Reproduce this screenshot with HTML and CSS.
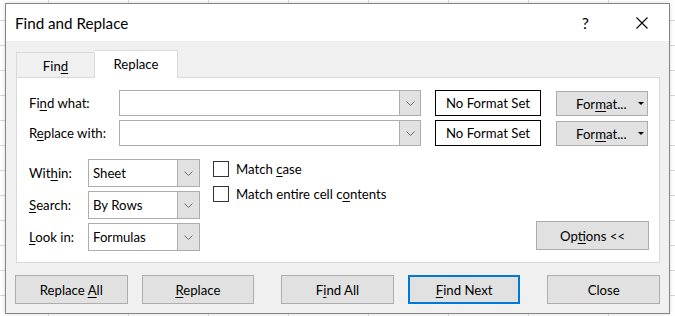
FILE: index.html
```html
<!DOCTYPE html>
<html>
<head>
<meta charset="utf-8">
<link rel="stylesheet" href="styles.css">
</head>
<body>
<div class="dialog">
  <div class="titlebar">
    <span class="title">Find and Replace</span>
    <span class="help">?</span>
    <span class="close"><svg width="12" height="12" viewBox="0 0 12 12"><path d="M0.5 0.5 L11.5 11.5 M11.5 0.5 L0.5 11.5" stroke="#000" stroke-width="1.1" fill="none"/></svg></span>
  </div>
  <div class="body">
    <div class="tabs">
      <div class="tab"><span>Fin<u>d</u></span></div>
      <div class="tab active"><span>Replace</span></div>
    </div>
    <div class="panel">
      <div class="row">
        <span class="label">Fi<u>n</u>d what:</span>
        <div class="combo"><span class="combo-text"></span><span class="drop"><svg width="9" height="5" viewBox="0 0 9 5"><path d="M0.5 0.5 L4.5 4.5 L8.5 0.5" stroke="#6d6d6d" fill="none"/></svg></span></div>
        <div class="nofmt"><span>No Format Set</span></div>
        <div class="fmtbtn"><span>For<u>m</u>at...</span><span class="tri"></span></div>
      </div>
      <div class="row row2">
        <span class="label">R<u>e</u>place with:</span>
        <div class="combo"><span class="combo-text"></span><span class="drop"><svg width="9" height="5" viewBox="0 0 9 5"><path d="M0.5 0.5 L4.5 4.5 L8.5 0.5" stroke="#6d6d6d" fill="none"/></svg></span></div>
        <div class="nofmt"><span>No Format Set</span></div>
        <div class="fmtbtn"><span>For<u>m</u>at...</span><span class="tri"></span></div>
      </div>
      <div class="lower">
        <div class="selects">
          <div class="srow"><span class="slabel">Wit<u>h</u>in:</span><div class="select"><span class="select-text">Sheet</span><span class="drop"><svg width="9" height="5" viewBox="0 0 9 5"><path d="M0.5 0.5 L4.5 4.5 L8.5 0.5" stroke="#6d6d6d" fill="none"/></svg></span></div></div>
          <div class="srow"><span class="slabel"><u>S</u>earch:</span><div class="select"><span class="select-text">By Rows</span><span class="drop"><svg width="9" height="5" viewBox="0 0 9 5"><path d="M0.5 0.5 L4.5 4.5 L8.5 0.5" stroke="#6d6d6d" fill="none"/></svg></span></div></div>
          <div class="srow"><span class="slabel"><u>L</u>ook in:</span><div class="select"><span class="select-text">Formulas</span><span class="drop"><svg width="9" height="5" viewBox="0 0 9 5"><path d="M0.5 0.5 L4.5 4.5 L8.5 0.5" stroke="#6d6d6d" fill="none"/></svg></span></div></div>
        </div>
        <div class="checks">
          <div class="check"><span class="box"></span><span>Match <u>c</u>ase</span></div>
          <div class="check"><span class="box"></span><span>Match entire cell c<u>o</u>ntents</span></div>
        </div>
        <div class="options-wrap">
          <div class="btn options"><span>Op<u>t</u>ions &lt;&lt;</span></div>
        </div>
      </div>
    </div>
    <div class="buttons">
      <div class="btn"><span>Replace <u>A</u>ll</span></div>
      <div class="btn"><span><u>R</u>eplace</span></div>
      <div class="btn wide-gap"><span>F<u>i</u>nd All</span></div>
      <div class="btn default"><span><u>F</u>ind Next</span></div>
      <div class="btn wide-gap"><span>Close</span></div>
    </div>
  </div>
</div>
</body>
</html>
```

FILE: styles.css
```css
* { box-sizing: border-box; }
html, body { margin: 0; padding: 0; }
body {
  width: 675px;
  height: 316px;
  overflow: hidden;
  background-color: #fff;
  background-image:
    linear-gradient(to right, transparent 47px, #d8d8d8 47px, #d8d8d8 48px, transparent 48px),
    linear-gradient(to bottom, transparent 24px, #d8d8d8 24px, #d8d8d8 25px, transparent 25px);
  background-size: 80px 100%, 100% 25px;
  background-position: 1px 0, 0 -4px;
  font-family: "Lato", "Noto Sans", sans-serif;
  font-size: 13.2px;
  color: #000;
  padding-top: 3px;
  padding-left: 5px;
}
u { text-underline-offset: 2px; text-decoration-thickness: 1px; }

.dialog {
  width: 665px;
  height: 311px;
  border: 1px solid #858585;
  background: #f0f0f0;
  box-shadow: 0 0 4px rgba(0,0,0,0.15);
  display: flex;
  flex-direction: column;
}

.titlebar {
  height: 37px;
  background: #fff;
  display: flex;
  align-items: center;
  padding-left: 9px;
  flex: none;
}
.title { font-size: 15.2px; flex: 1; padding-top: 1px; }
.help { font-size: 16px; margin-right: 47px; }
.close { width: 12px; height: 12px; margin-right: 21px; display: flex; }

.body {
  flex: 1;
  padding: 0 9px 0 10px;
}

.tabs {
  margin-top: 9px;
  height: 27px;
  display: flex;
  align-items: flex-end;
  position: relative;
  z-index: 1;
}
.tab {
  width: 79px;
  height: 25px;
  border: 1px solid #d9d9d9;
  border-bottom: none;
  display: flex;
  align-items: center;
  justify-content: center;
  padding-top: 1px;
}
.tab.active {
  width: 83px;
  height: 28px;
  margin-bottom: -1px;
  background: #fff;
  border-left: none;
  padding-top: 0;
  padding-bottom: 2px;
}

.panel {
  height: 186px;
  border: 1px solid #d9d9d9;
  background: #fff;
  padding: 12px 10px 0 12px;
}

.row {
  display: flex;
  align-items: center;
  height: 26px;
}
.row2 { margin-top: 4px; }
.label { width: 90px; }
.combo {
  width: 302px;
  height: 26px;
  border: 1px solid #adadad;
  display: flex;
}
.combo-text { flex: 1; }
.drop {
  width: 22px;
  background: #e1e1e1;
  border-left: 1px solid #adadad;
  display: flex;
  align-items: center;
  justify-content: center;
}
.combo .drop { width: 21px; }
.nofmt {
  margin-left: 14px;
  width: 106px;
  height: 26px;
  border: 1px solid #000;
  display: flex;
  align-items: center;
  justify-content: center;
}
.fmtbtn {
  margin-left: 15px;
  width: 92px;
  height: 25px;
  margin-top: 1px;
  background: #e1e1e1;
  border: 1px solid #adadad;
  display: flex;
  align-items: center;
  padding-left: 19px;
  position: relative;
}
.tri {
  position: absolute;
  right: 3px;
  top: 10px;
  width: 0;
  height: 0;
  border-left: 3px solid transparent;
  border-right: 3px solid transparent;
  border-top: 3px solid #000;
}

.lower {
  margin-top: 13px;
  display: flex;
}
.selects { display: flex; flex-direction: column; gap: 4px; }
.srow { display: flex; align-items: center; height: 28px; }
.slabel { width: 59px; }
.select {
  width: 112px;
  height: 28px;
  border: 1px solid #adadad;
  display: flex;
}
.select-text { flex: 1; padding-left: 4px; display: flex; align-items: center; }

.checks {
  margin-left: 13px;
  padding-top: 2px;
  display: flex;
  flex-direction: column;
  gap: 9px;
}
.check { display: flex; align-items: center; height: 16px; gap: 7px; }
.box {
  width: 16px;
  height: 16px;
  border: 1px solid #333;
  background: #fff;
  flex: none;
}

.options-wrap {
  flex: 1;
  display: flex;
  justify-content: flex-end;
  align-items: flex-end;
  padding-bottom: 1px;
}

.btn {
  width: 113px;
  height: 29px;
  background: #e1e1e1;
  border: 1px solid #adadad;
  display: flex;
  align-items: center;
  justify-content: center;
}
.options { width: 113px; height: 29px; }

.buttons {
  margin-top: 12px;
  margin-left: -1px;
  display: flex;
  gap: 14px;
}
.buttons .wide-gap { margin-left: 13px; }
.btn.default { border: 2px solid #0078d7; }
```
